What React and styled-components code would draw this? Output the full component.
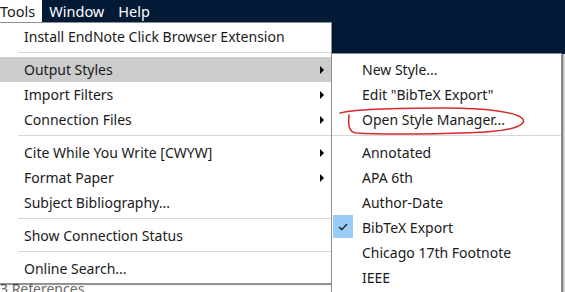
import React from 'react'
import styled, { createGlobalStyle } from 'styled-components'

const GlobalStyle = createGlobalStyle`
  html, body {
    margin: 0;
    padding: 0;
    background: #ffffff;
  }
  body {
    font-family: "Segoe UI", "Noto Sans", "Open Sans", sans-serif;
  }
`

const Screen = styled.div`
  position: relative;
  width: 565px;
  height: 292px;
  overflow: hidden;
  background: #ffffff;
  display: flex;
  flex-direction: column;
`

const Header = styled.div`
  height: 54px;
  background: #021a35;
  flex: none;
`

const MenuBar = styled.div`
  display: flex;
  height: 22px;
  align-items: stretch;
`

const BarItem = styled.div`
  display: flex;
  align-items: center;
  padding: 0 7px 1px;
  font-size: 14.5px;
  color: ${props => props.active ? '#1a1a1a' : '#ffffff'};
  background: ${props => props.active ? '#ffffff' : 'transparent'};
  &:first-child {
    padding-left: 0;
  }
`

const Body = styled.div`
  flex: 1;
  position: relative;
  display: flex;
`

const ListPane = styled.div`
  width: 331px;
  border-right: 1px solid #c8c8c8;
  display: flex;
  flex-direction: column;
  justify-content: flex-end;
`

const RefCount = styled.div`
  font-size: 14px;
  color: #6a6a6a;
  line-height: 14px;
  margin-bottom: -4px;
`

const ScrollStrip = styled.div`
  margin-left: auto;
  width: 4px;
  background: #d4d4d4;
  border-left: 1px solid #8a8a8a;
`

const Menu = styled.div`
  position: absolute;
  left: ${props => props.left}px;
  top: ${props => props.top}px;
  width: ${props => props.width}px;
  background: #ffffff;
  border: 1px solid #8f8f8f;
  box-shadow: 1px 1px 1px rgba(0, 0, 0, 0.4);
  padding: ${props => props.padTop}px 0 2px;
  box-sizing: border-box;
`

const Item = styled.div`
  position: relative;
  height: 25px;
  display: flex;
  align-items: center;
  padding-left: ${props => props.indent}px;
  font-size: 14px;
  color: #1a1a1a;
  background: ${props => props.selected ? '#cccccc' : 'transparent'};
  white-space: nowrap;
`

const Arrow = styled.span`
  position: absolute;
  right: 7px;
  top: 9px;
  width: 0;
  height: 0;
  border-top: 4px solid transparent;
  border-bottom: 4px solid transparent;
  border-left: 4px solid #000000;
`

const Check = styled.span`
  position: absolute;
  left: 1px;
  top: 0;
  width: 20px;
  height: 23px;
  background: #99ccf7;
  display: flex;
  align-items: center;
  justify-content: center;
`

const Separator = styled.div`
  height: 1px;
  background: #d7d7d7;
  margin: 3px 0 4px ${props => props.inset}px;
`

const Scribble = styled.svg`
  position: absolute;
  left: 336px;
  top: 104px;
  overflow: visible;
`

const mainItems = [
  { label: 'Install EndNote Click Browser Extension' },
  { sep: true },
  { label: 'Output Styles', arrow: true, selected: true },
  { label: 'Import Filters', arrow: true },
  { label: 'Connection Files', arrow: true },
  { sep: true },
  { label: 'Cite While You Write [CWYW]', arrow: true },
  { label: 'Format Paper', arrow: true },
  { label: 'Subject Bibliography...' },
  { sep: true },
  { label: 'Show Connection Status' },
  { sep: true },
  { label: 'Online Search...' },
]

const styleItems = [
  { label: 'New Style...' },
  { label: 'Edit "BibTeX Export"' },
  { label: 'Open Style Manager...' },
  { sep: true },
  { label: 'Annotated' },
  { label: 'APA 6th' },
  { label: 'Author-Date' },
  { label: 'BibTeX Export', checked: true },
  { label: 'Chicago 17th Footnote' },
  { label: 'IEEE' },
  { label: 'MLA 8th' },
]

const renderItems = (items, indent, inset) =>
  items.map((it, i) =>
    it.sep ? (
      <Separator key={i} inset={inset} />
    ) : (
      <Item key={i} indent={indent} selected={it.selected}>
        {it.checked && (
          <Check>
            <svg width='10' height='8' viewBox='0 0 10 8'>
              <path d='M1 4 L3.8 6.6 L9 1' fill='none' stroke='#1a1a1a' strokeWidth='1.3' />
            </svg>
          </Check>
        )}
        {it.label}
        {it.arrow && <Arrow />}
      </Item>
    )
  )

const App = () => {
  return (
    <>
      <GlobalStyle />
      <Screen>
        <Header>
          <MenuBar>
            <BarItem active>Tools</BarItem>
            <BarItem>Window</BarItem>
            <BarItem>Help</BarItem>
          </MenuBar>
        </Header>
        <Body>
          <ListPane>
            <RefCount>3 References</RefCount>
          </ListPane>
          <ScrollStrip />
        </Body>

        <Menu left={-2} top={22} width={334} padTop={1}>
          {renderItems(mainItems, 25, 19)}
        </Menu>

        <Menu left={331} top={53} width={231} padTop={3}>
          {renderItems(styleItems, 30, 0)}
        </Menu>

        <Scribble width='200' height='34' viewBox='0 0 200 34'>
          <path
            d='M4 9 C 20 5, 60 4, 110 4 C 150 4, 178 8, 186 14 C 192 20, 180 26, 150 28 C 110 30, 50 31, 20 29 C 13 28, 12 22, 13 11'
            fill='none'
            stroke='#d42a2a'
            strokeWidth='1.5'
            strokeLinecap='round'
          />
        </Scribble>
      </Screen>
    </>
  )
}

export default App
